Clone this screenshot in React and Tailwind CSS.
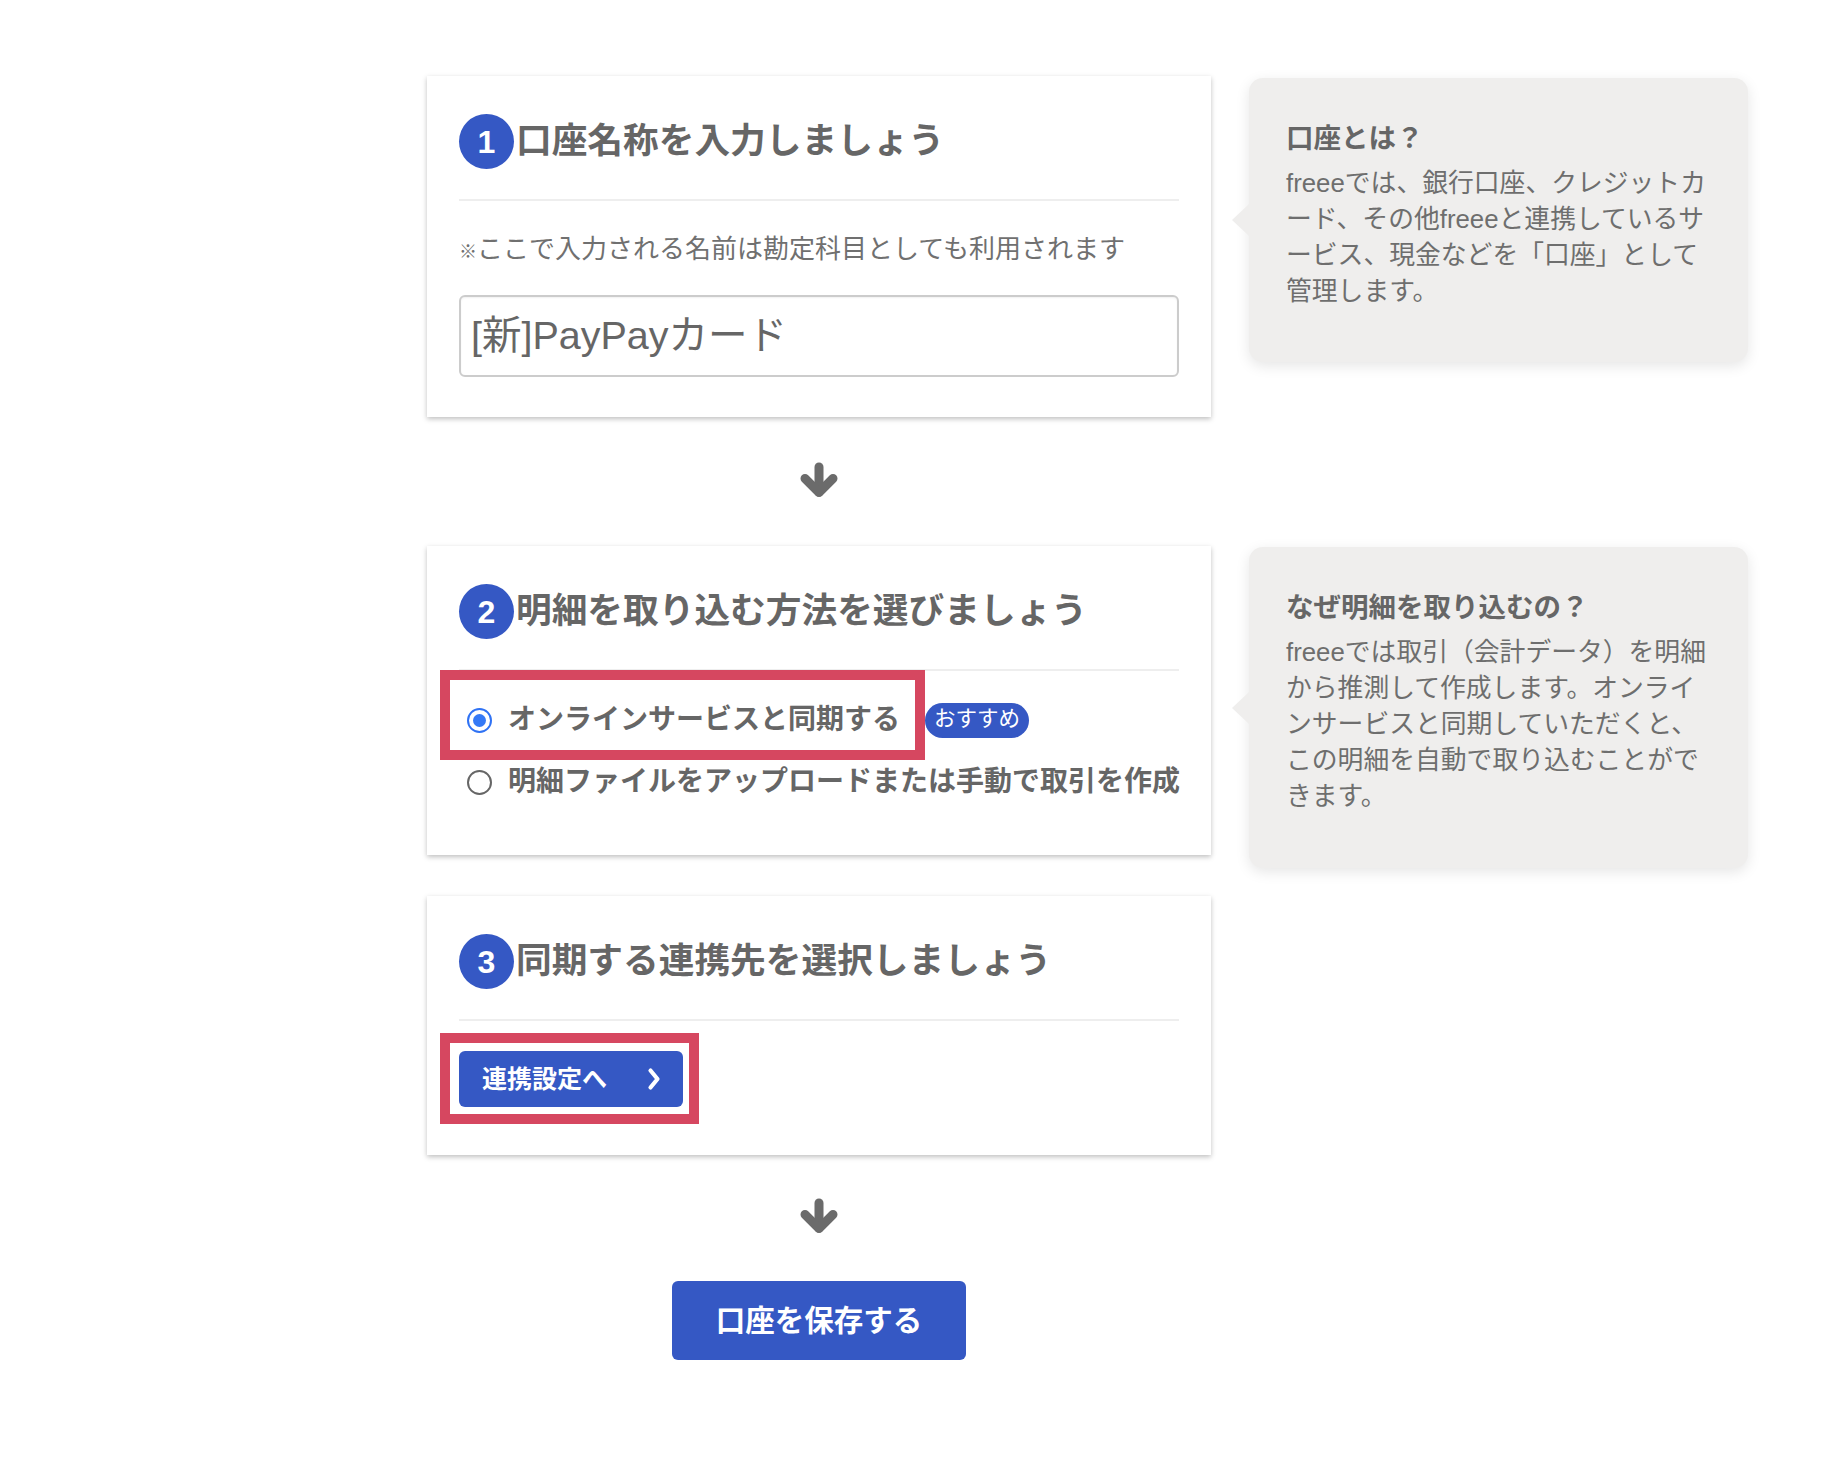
import React from "react";

const FONT = { fontFamily: '"Liberation Sans", "Noto Sans CJK JP", sans-serif' };

function Num({ n }) {
  return (
    <div className="w-[55px] h-[55px] shrink-0 rounded-full bg-[#3558c4] flex items-center justify-center text-white text-[32px] font-bold leading-none">
      {n}
    </div>
  );
}

function Heading({ n, children }) {
  return (
    <div className="flex items-center h-[55px]">
      <Num n={n} />
      <div className="ml-[2px] text-[35.7px] font-bold text-[#666666] leading-none whitespace-nowrap">
        {children}
      </div>
    </div>
  );
}

function Divider() {
  return <div className="mt-[30px] h-[2px] bg-[#eeeeee]" />;
}

function Arrow() {
  return (
    <svg width="38" height="36" viewBox="0 0 38 36" className="overflow-visible">
      <g stroke="#6b6b6b" strokeWidth="9" strokeLinecap="round" strokeLinejoin="round" fill="none">
        <path d="M19 5 L19 30" />
        <path d="M5 16.5 L19 30.5 L33 16.5" />
      </g>
    </svg>
  );
}

function Card({ children, className = "" }) {
  return (
    <div className={"w-[784px] bg-white px-[32px] pt-[38px] shadow-[0_2px_5px_rgba(0,0,0,0.25)] " + className}>
      {children}
    </div>
  );
}

function Panel({ title, lines, className = "" }) {
  return (
    <div className={"relative w-[499px] rounded-[14px] bg-[#efeeed] pl-[37px] pt-[43px] shadow-[0_4px_14px_rgba(0,0,0,0.10)] " + className}>
      <div className="absolute right-full top-1/2 -translate-y-1/2 w-0 h-0 border-y-[16px] border-y-transparent border-r-[17px] border-r-[#efeeed]" />
      <div className="text-[27.5px] leading-[36px] font-bold text-[#666666] whitespace-nowrap">{title}</div>
      <div className="mt-[8px] text-[25.8px] leading-[36px] text-[#6e6e6e]">
        {lines.map((l, i) => (
          <div key={i} className="whitespace-nowrap">{l}</div>
        ))}
      </div>
    </div>
  );
}

export default function App() {
  return (
    <div className="min-h-[1458px] bg-white pt-[76px] pl-[427px]" style={FONT}>
      <div className="flex items-start gap-[38px]">
        {/* Left column */}
        <div className="flex flex-col w-[784px]">
          <Card className="pb-[40px]">
            <Heading n="1">口座名称を入力しましょう</Heading>
            <Divider />
            <div className="mt-[30px] h-[36px] flex items-center text-[26px] leading-none text-[#707070] whitespace-nowrap">
              <span className="text-[18px] leading-none mt-[6px]">※</span>
              <span>ここで入力される名前は勘定科目としても利用されます</span>
            </div>
            <div className="mt-[28px] h-[82px] rounded-[6px] border-2 border-[#cccccc] shadow-[inset_0_1px_2px_rgba(0,0,0,0.06)] flex items-center pl-[10px] text-[39.5px] text-[#666666] leading-none">
              [新]PayPayカード
            </div>
          </Card>

          <div className="flex justify-center pt-[45px] pb-[48px]">
            <Arrow />
          </div>

          <Card className="pb-[48px]">
            <Heading n="2">明細を取り込む方法を選びましょう</Heading>
            <Divider />
            <div className="relative mt-[24px] h-[50px] flex items-center pl-[8px]">
              <div className="pointer-events-none absolute left-[-19px] top-[-25px] w-[485px] h-[90px] border-[10px] border-[#d64760]" />
              <div className="w-[25px] h-[25px] shrink-0 rounded-full border-[2.5px] border-[#2f72f4] bg-white flex items-center justify-center">
                <div className="w-[13px] h-[13px] rounded-full bg-[#3479f6]" />
              </div>
              <div className="ml-[16px] text-[28px] font-bold text-[#666666] leading-none whitespace-nowrap">
                オンラインサービスと同期する
              </div>
              <div className="ml-[25px] h-[35px] px-[9px] rounded-full bg-[#3558c4] text-white text-[21.5px] leading-none flex items-center whitespace-nowrap">
                おすすめ
              </div>
            </div>
            <div className="mt-[12px] h-[50px] flex items-center pl-[8px]">
              <div className="w-[25px] h-[25px] shrink-0 rounded-full border-2 border-[#666666] bg-white" />
              <div className="ml-[16px] text-[28px] font-bold text-[#666666] leading-none whitespace-nowrap">
                明細ファイルをアップロードまたは手動で取引を作成
              </div>
            </div>
          </Card>

          <Card className="mt-[41px] pb-[48px]">
            <Heading n="3">同期する連携先を選択しましょう</Heading>
            <Divider />
            <div className="mt-[30px] flex">
              <div className="relative">
                <div className="pointer-events-none absolute left-[-19px] top-[-18px] right-[-16px] bottom-[-17px] border-[10px] border-[#d64760]" />
                <button className="w-[224px] h-[56px] rounded-[6px] bg-[#3558c4] flex items-center pl-[23px] text-white text-[25px] font-bold leading-none">
                  <span className="whitespace-nowrap">連携設定へ</span>
                  <svg width="14" height="24" viewBox="0 0 14 24" className="ml-[40px]">
                    <path d="M3.5 3.5 L10.5 12 L3.5 20.5" stroke="white" strokeWidth="4.2" fill="none" strokeLinecap="round" strokeLinejoin="round" />
                  </svg>
                </button>
              </div>
            </div>
          </Card>

          <div className="flex justify-center pt-[43px] pb-[47px]">
            <Arrow />
          </div>

          <div className="flex justify-center">
            <button className="w-[294px] h-[79px] rounded-[6px] bg-[#3558c4] text-white text-[29.5px] font-bold leading-none whitespace-nowrap">
              口座を保存する
            </button>
          </div>
        </div>

        {/* Right column */}
        <div className="flex flex-col w-[499px]">
          <Panel
            className="mt-[2px] pb-[53px]"
            title="口座とは？"
            lines={[
              "freeeでは、銀行口座、クレジットカ",
              "ード、その他freeeと連携しているサ",
              "ービス、現金などを「口座」として",
              "管理します。",
            ]}
          />
          <Panel
            className="mt-[185px] pb-[54px]"
            title="なぜ明細を取り込むの？"
            lines={[
              "freeeでは取引（会計データ）を明細",
              "から推測して作成します。オンライ",
              "ンサービスと同期していただくと、",
              "この明細を自動で取り込むことがで",
              "きます。",
            ]}
          />
        </div>
      </div>
    </div>
  );
}
